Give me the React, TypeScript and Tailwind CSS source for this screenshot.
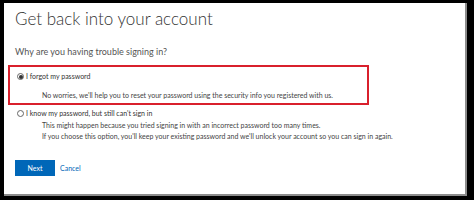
import { useState } from "react";

const options = [
  {
    id: "forgot",
    label: "I forgot my password",
    lines: [
      "No worries, we'll help you to reset your password using the security info you registered with us.",
    ],
  },
  {
    id: "locked",
    label: "I know my password, but still can't sign in",
    lines: [
      "This might happen because you tried signing in with an incorrect password too many times.",
      "If you choose this option, you'll keep your existing password and we'll unlock your account so you can sign in again.",
    ],
  },
];

export default function App() {
  const [choice, setChoice] = useState("forgot");

  return (
    <div className="w-[474px] h-[200px] bg-black pl-[4px] pt-[3px] font-['Lato',sans-serif]">
      <div className="w-[463px] h-[193px] bg-white border-r-2 border-b-2 border-[#8c8c8c] pl-[11px] pt-[4px]">
        <h1 className="text-[17px] font-light text-[#333] leading-[24px]">Get back into your account</h1>
        <h2 className="mt-[14px] text-[9px] text-[#555] leading-[14px]">Why are you having trouble signing in?</h2>

        <div className="mt-[6px] -ml-[7px] flex flex-col">
          {options.map((o) => {
            const active = choice === o.id;
            return (
              <div
                key={o.id}
                onClick={() => setChoice(o.id)}
                className={`w-[361px] border-2 pl-[7px] cursor-pointer ${
                  active ? "border-[#d9202c] pt-[3.5px] pb-[2px]" : "border-transparent pt-[1px]"
                }`}
              >
                <div className="flex items-center gap-[2px] h-[12px] text-[7px] text-[#333]">
                  <span className="w-[7px] h-[7px] rounded-full border border-[#666] flex items-center justify-center">
                    {active && <span className="w-[4px] h-[4px] rounded-full bg-[#333]" />}
                  </span>
                  <span>{o.label}</span>
                </div>
                <div
                  className={`pl-[25px] text-[7px] text-[#444] leading-[11px] whitespace-nowrap ${
                    active ? "mt-[7px]" : "mt-[0.5px]"
                  }`}
                >
                  {o.lines.map((l) => (
                    <div key={l}>{l}</div>
                  ))}
                </div>
              </div>
            );
          })}
        </div>

        <div className="mt-[16px] flex items-center gap-[5px]">
          <button className="w-[40px] h-[16px] bg-[#0067b8] text-white text-[7px] leading-none">Next</button>
          <a href="#" className="text-[7px] text-[#0067b8]">Cancel</a>
        </div>
      </div>
    </div>
  );
}
